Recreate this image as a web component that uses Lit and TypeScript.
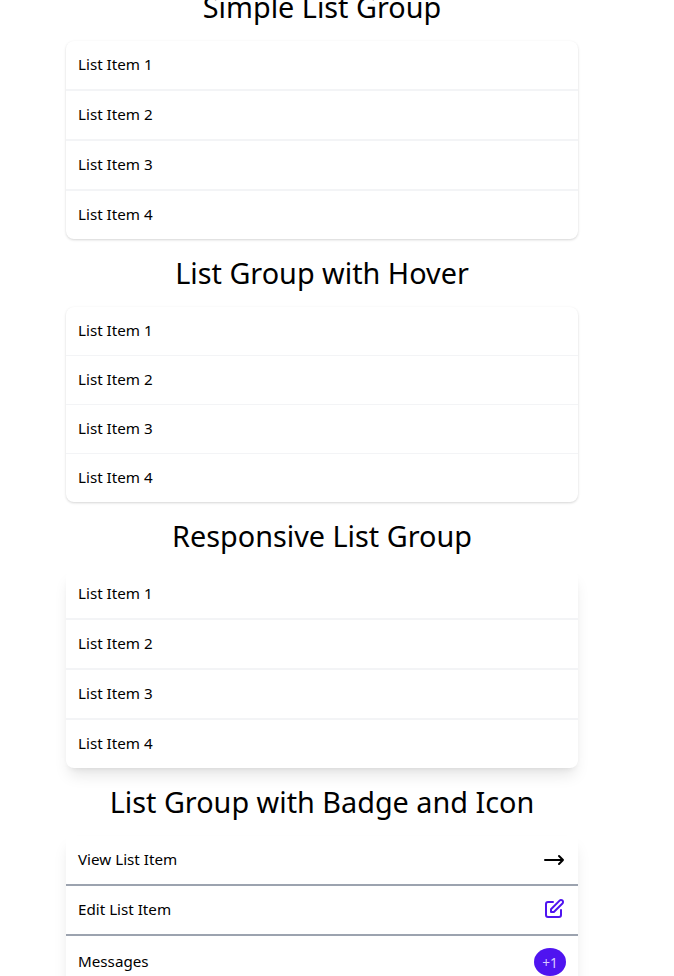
import { LitElement, html, css } from 'lit';
import { customElement } from 'lit/decorators.js';

const items = ['List Item 1', 'List Item 2', 'List Item 3', 'List Item 4'];

@customElement('app-root')
export class AppRoot extends LitElement {
  static styles = css`
    :host {
      display: block;
      height: 976px;
      overflow: hidden;
      background: #fff;
      font-family: 'Noto Sans', 'Open Sans', sans-serif;
      color: #000;
    }

    .page {
      width: 512px;
      margin: -15px 0 0 66px;
    }

    h2 {
      margin: 0;
      height: 45px;
      font-size: 28.8px;
      line-height: 43px;
      font-weight: 400;
      text-align: center;
    }

    .title-gap {
      margin-top: 12px;
    }

    .list {
      margin: 11px 0 0;
      padding: 0;
      list-style: none;
      background: #fff;
      border-radius: 8px;
    }

    .simple {
      box-shadow: 0 1px 3px rgba(0, 0, 0, 0.12), 0 1px 2px rgba(0, 0, 0, 0.05);
    }

    .large {
      box-shadow: 0 10px 15px -3px rgba(0, 0, 0, 0.1), 0 4px 6px -4px rgba(0, 0, 0, 0.1);
    }

    .badged {
      border-radius: 0;
      box-shadow: 0 10px 15px -3px rgba(0, 0, 0, 0.1), 0 4px 6px -4px rgba(0, 0, 0, 0.1);
    }

    li {
      display: flex;
      align-items: center;
      justify-content: space-between;
      padding: 0 12px;
      height: 48px;
      font-size: 15.2px;
      border-bottom: 2px solid #f3f4f6;
    }

    li:last-child {
      border-bottom: none;
    }

    .label {
      margin-bottom: 2px;
    }

    .thin li {
      border-bottom: 1px solid #f3f4f6;
    }

    .thin li:last-child {
      border-bottom: none;
    }

    .badged li {
      border-bottom-color: #9ca3af;
    }

    .badged li:last-child {
      height: 52px;
      border-bottom: none;
    }

    .arrow {
      color: #000;
    }

    .edit {
      color: #4f14f0;
      margin-bottom: 2px;
    }

    .count {
      display: flex;
      align-items: center;
      justify-content: center;
      width: 32px;
      height: 28px;
      border-radius: 50%;
      background: #4f14f0;
      color: #d9ccff;
      font-size: 13.6px;
    }
  `;

  private plainItems() {
    return items.map((item) => html`<li><span class="label">${item}</span></li>`);
  }

  render() {
    return html`
      <div class="page">
        <h2>Simple List Group</h2>
        <ul class="list simple">${this.plainItems()}</ul>
        <h2 class="title-gap">List Group with Hover</h2>
        <ul class="list simple thin">${this.plainItems()}</ul>
        <h2 class="title-gap">Responsive List Group</h2>
        <ul class="list large">${this.plainItems()}</ul>
        <h2 class="title-gap">List Group with Badge and Icon</h2>
        <ul class="list badged">
          <li>
            <span class="label">View List Item</span>
            <svg class="arrow" width="24" height="24" viewBox="0 0 24 24" fill="none" stroke="currentColor" stroke-width="2" stroke-linecap="round" stroke-linejoin="round">
              <path d="M17 8l4 4m0 0l-4 4m4-4H3" />
            </svg>
          </li>
          <li>
            <span class="label">Edit List Item</span>
            <svg class="edit" width="24" height="24" viewBox="0 0 24 24" fill="none" stroke="currentColor" stroke-width="2" stroke-linecap="round" stroke-linejoin="round">
              <path d="M11 5H6a2 2 0 00-2 2v11a2 2 0 002 2h11a2 2 0 002-2v-5m-1.414-9.414a2 2 0 112.828 2.828L11.828 15H9v-2.828l8.586-8.586z" />
            </svg>
          </li>
          <li>
            <span class="label">Messages</span>
            <span class="count">+1</span>
          </li>
        </ul>
      </div>
    `;
  }
}
